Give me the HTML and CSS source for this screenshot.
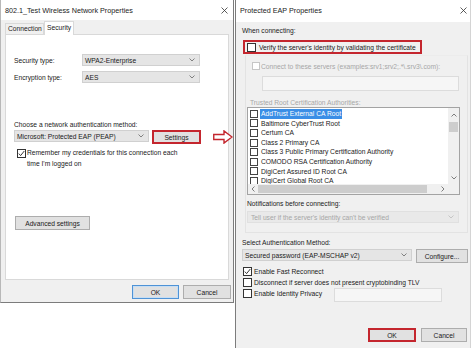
FILE: index.html
```html
<!DOCTYPE html>
<html lang="en">
<head>
  <meta charset="UTF-8">
  <title>Wireless Network Properties</title>
  <link rel="stylesheet" href="styles.css">
</head>
<body>
  <!-- Left dialog -->
  <div class="dialog dialog-left">
    <div class="titlebar">
      <span>802.1_Test Wireless Network Properties</span>
      <svg class="close" width="7" height="7" viewBox="0 0 7 7"><path d="M0.5 0.5L6.5 6.5M6.5 0.5L0.5 6.5" stroke="#333" stroke-width="0.8"/></svg>
    </div>
    <div class="tabs">
      <div class="tab tab-connection">Connection</div>
      <div class="tab tab-security active">Security</div>
    </div>
    <div class="tab-panel">
      <div class="form-row">
        <span class="form-label">Security type:</span>
        <div class="combo combo-type"><span>WPA2-Enterprise</span><svg width="6" height="4" viewBox="0 0 6 4"><polyline points="0.5,0.5 3,3 5.5,0.5" fill="none" stroke="#666" stroke-width="0.8"/></svg></div>
      </div>
      <div class="form-row">
        <span class="form-label">Encryption type:</span>
        <div class="combo combo-type"><span>AES</span><svg width="6" height="4" viewBox="0 0 6 4"><polyline points="0.5,0.5 3,3 5.5,0.5" fill="none" stroke="#666" stroke-width="0.8"/></svg></div>
      </div>

      <div class="auth-label">Choose a network authentication method:</div>
      <div class="auth-row">
        <div class="combo combo-auth"><span>Microsoft: Protected EAP (PEAP)</span><svg width="6" height="4" viewBox="0 0 6 4"><polyline points="0.5,0.5 3,3 5.5,0.5" fill="none" stroke="#666" stroke-width="0.8"/></svg></div>
        <div class="btn btn-settings marked">Settings</div>
      </div>

      <div class="remember-row">
        <span class="check"><svg width="7" height="7" viewBox="0 0 7 7"><polyline points="0.8,3.6 2.6,5.6 6.3,1" fill="none" stroke="#222" stroke-width="0.9"/></svg></span>
        <span class="remember-text">Remember my credentials for this connection each<br>time I'm logged on</span>
      </div>

      <div class="btn btn-advanced">Advanced settings</div>
    </div>
    <div class="footer footer-left">
      <div class="btn btn-default btn-ok-left">OK</div>
      <div class="btn btn-cancel-left">Cancel</div>
    </div>

    <!-- arrow pointing to the next dialog -->
    <svg class="next-arrow" width="20" height="14" viewBox="0 0 20 14"><polygon points="0.75,4.5 11,4.5 11,0.9 19,7 11,13.1 11,9.5 0.75,9.5" fill="#fff" stroke="#c4262e" stroke-width="1.4"/></svg>
  </div>

  <!-- Right dialog -->
  <div class="dialog dialog-right">
    <div class="titlebar">
      <span>Protected EAP Properties</span>
      <svg class="close" width="7" height="7" viewBox="0 0 7 7"><path d="M0.5 0.5L6.5 6.5M6.5 0.5L0.5 6.5" stroke="#333" stroke-width="0.8"/></svg>
    </div>

    <div class="caption">When connecting:</div>
    <div class="verify-box">
      <span class="check"></span>
      <span>Verify the server's identity by validating the certificate</span>
    </div>

    <div class="server-group">
      <div class="connect-row">
        <span class="check check-disabled"></span>
        <span class="muted">Connect to these servers (examples:srv1;srv2;.*\.srv3\.com):</span>
      </div>
      <div class="input input-servers"></div>

      <div class="trusted-label muted">Trusted Root Certification Authorities:</div>
      <div class="cert-list">
        <div class="cert-items">
          <div class="cert"><span class="check check-small"></span><span class="cert-name selected">AddTrust External CA Root</span></div>
          <div class="cert"><span class="check check-small"></span><span class="cert-name">Baltimore CyberTrust Root</span></div>
          <div class="cert"><span class="check check-small"></span><span class="cert-name">Certum CA</span></div>
          <div class="cert"><span class="check check-small"></span><span class="cert-name">Class 2 Primary CA</span></div>
          <div class="cert"><span class="check check-small"></span><span class="cert-name">Class 3 Public Primary Certification Authority</span></div>
          <div class="cert"><span class="check check-small"></span><span class="cert-name">COMODO RSA Certification Authority</span></div>
          <div class="cert"><span class="check check-small"></span><span class="cert-name">DigiCert Assured ID Root CA</span></div>
          <div class="cert"><span class="check check-small"></span><span class="cert-name">DigiCert Global Root CA</span></div>
        </div>
        <div class="vscroll">
          <div class="scroll-arrow"><svg width="6" height="4" viewBox="0 0 6 4"><polyline points="0.5,3.5 3,1 5.5,3.5" fill="none" stroke="#606060" stroke-width="0.8"/></svg></div>
          <div class="vthumb"></div>
          <div class="spacer"></div>
          <div class="scroll-arrow"><svg width="6" height="4" viewBox="0 0 6 4"><polyline points="0.5,0.5 3,3 5.5,0.5" fill="none" stroke="#606060" stroke-width="0.8"/></svg></div>
        </div>
        <div class="hscroll">
          <div class="scroll-arrow harrow"><svg width="4" height="6" viewBox="0 0 4 6"><polyline points="3.5,0.5 1,3 3.5,5.5" fill="none" stroke="#606060" stroke-width="0.8"/></svg></div>
          <div class="hthumb"></div>
          <div class="spacer"></div>
          <div class="scroll-arrow harrow"><svg width="4" height="6" viewBox="0 0 4 6"><polyline points="0.5,0.5 3,3 0.5,5.5" fill="none" stroke="#606060" stroke-width="0.8"/></svg></div>
        </div>
        <div class="corner"></div>
      </div>

      <div class="notify-label">Notifications before connecting:</div>
      <div class="combo combo-disabled"><span>Tell user if the server's identity can't be verified</span><svg width="6" height="4" viewBox="0 0 6 4"><polyline points="0.5,0.5 3,3 5.5,0.5" fill="none" stroke="#bbb" stroke-width="0.8"/></svg></div>
    </div>

    <div class="caption method-label">Select Authentication Method:</div>
    <div class="method-row">
      <div class="combo combo-method"><span>Secured password (EAP-MSCHAP v2)</span><svg width="6" height="4" viewBox="0 0 6 4"><polyline points="0.5,0.5 3,3 5.5,0.5" fill="none" stroke="#666" stroke-width="0.8"/></svg></div>
      <div class="btn btn-configure">Configure...</div>
    </div>

    <div class="options">
      <div class="option">
        <span class="check"><svg width="7" height="7" viewBox="0 0 7 7"><polyline points="0.8,3.6 2.6,5.6 6.3,1" fill="none" stroke="#222" stroke-width="0.9"/></svg></span>
        <span>Enable Fast Reconnect</span>
      </div>
      <div class="option">
        <span class="check"></span>
        <span>Disconnect if server does not present cryptobinding TLV</span>
      </div>
      <div class="option">
        <span class="check"></span>
        <span class="privacy-label">Enable Identity Privacy</span>
        <div class="input input-privacy"></div>
      </div>
    </div>

    <div class="footer footer-right">
      <div class="btn btn-ok-right marked">OK</div>
      <div class="btn btn-cancel-right">Cancel</div>
    </div>
  </div>
</body>
</html>
```

FILE: styles.css
```css
* {
  box-sizing: border-box;
}

body {
  margin: 0;
  width: 474px;
  height: 348px;
  overflow: hidden;
  background: #ffffff;
  font-family: "Liberation Sans", Arial, sans-serif;
  font-size: 6.7px;
  color: #1a1a1a;
  display: flex;
  align-items: flex-start;
}

.dialog {
  background: #f0f0f0;
  display: flex;
  flex-direction: column;
}

.dialog-left {
  width: 234px;
  height: 303px;
  border-left: 1px solid #b8b8b8;
  border-right: 1px solid #7c7c7c;
  border-bottom: 1px solid #7c7c7c;
  position: relative;
}

.dialog-right {
  width: 236px;
  height: 348px;
  margin-left: 1px;
  border-left: 1px solid #7c7c7c;
  border-right: 1px solid #d4d4d4;
}

/* Title bars */
.titlebar {
  background: #ffffff;
  display: flex;
  align-items: center;
  justify-content: space-between;
  font-size: 7.2px;
  color: #222;
}

.dialog-left .titlebar {
  height: 20px;
  padding: 0 5px 0 4px;
}

.dialog-right .titlebar {
  height: 22px;
  padding: 0 3px 2px 4px;
}

/* Buttons, combos, checks */
.btn {
  display: flex;
  align-items: center;
  justify-content: center;
  height: 14px;
  background: #e1e1e1;
  border: 1px solid #adadad;
  flex: none;
}

.btn.marked {
  border: 2px solid #c4262e;
}

.btn-default {
  border: 1px solid #4f93d6;
  box-shadow: inset 0 0 0 1px #c7def4;
}

.combo {
  height: 12px;
  background: #e5e5e5;
  border: 1px solid #d0d0d0;
  display: flex;
  align-items: center;
  justify-content: space-between;
  padding: 0 4px 0 2px;
  flex: none;
  white-space: nowrap;
}

.check {
  width: 9px;
  height: 9px;
  border: 1px solid #333;
  background: #ffffff;
  flex: none;
  display: flex;
  align-items: center;
  justify-content: center;
}

.check-disabled {
  width: 8px;
  height: 8px;
  border-color: #c6c6c6;
}

.check-small {
  width: 8px;
  height: 8px;
  border-color: #444;
}

.muted {
  color: #a6a6a6;
}

.input {
  background: #f6f6f6;
  border: 1px solid #dcdcdc;
  flex: none;
}

/* Left dialog */
.tabs {
  display: flex;
  align-items: flex-end;
  height: 13px;
  margin-top: 1px;
  padding-left: 4px;
}

.tab {
  height: 11px;
  border: 1px solid #d9d9d9;
  border-bottom: none;
  padding-left: 2px;
  line-height: 10px;
}

.tab-connection {
  width: 39px;
}

.tab-security {
  width: 30px;
}

.tab.active {
  height: 14px;
  margin-bottom: -1px;
  background: #ffffff;
  line-height: 12px;
  position: relative;
  z-index: 1;
}

.tab-panel {
  margin-left: 4px;
  width: 224px;
  height: 246px;
  background: #ffffff;
  border: 1px solid #d9d9d9;
  padding: 19px 0 0 8px;
}

.form-row {
  display: flex;
  align-items: center;
  height: 12px;
}

.form-row + .form-row {
  margin-top: 5px;
}

.form-label {
  width: 68px;
}

.combo-type {
  width: 118px;
}

.auth-label {
  margin-top: 37px;
  line-height: 9px;
}

.auth-row {
  display: flex;
  align-items: flex-start;
  gap: 3px;
  margin-top: 1px;
}

.combo-auth {
  width: 135px;
}

.btn-settings {
  width: 49px;
}

.remember-row {
  display: flex;
  align-items: flex-start;
  margin-top: 3px;
}

.remember-row .check {
  margin: 2px 0 0 3px;
}

.remember-text {
  margin-left: 1px;
  line-height: 11px;
}

.btn-advanced {
  width: 75px;
  margin: 47px 0 0 1px;
}

.footer {
  display: flex;
  justify-content: flex-end;
}

.footer-left {
  gap: 4px;
  margin-top: 5px;
  padding-right: 2px;
}

.btn-ok-left {
  width: 47px;
}

.btn-cancel-left {
  width: 48px;
}

.next-arrow {
  position: absolute;
  left: 212px;
  top: 130px;
}

/* Right dialog */
.caption {
  margin-top: 4px;
  padding-left: 6px;
  line-height: 10px;
}

.verify-box {
  display: flex;
  align-items: center;
  gap: 3px;
  width: 179px;
  height: 14px;
  margin: 4px 0 0 7px;
  padding-left: 2px;
  border: 2px solid #c4262e;
  white-space: nowrap;
}

.server-group {
  width: 223px;
  margin: 1px 0 0 9px;
  padding-bottom: 9px;
  border: 1px solid #e3e3e3;
  border-top-color: #ececec;
}

.connect-row {
  display: flex;
  align-items: center;
  gap: 1px;
  height: 10px;
  margin: 5px 0 0 6px;
  white-space: nowrap;
}

.input-servers {
  width: 197px;
  height: 15px;
  margin: 5px 0 0 16px;
}

.trusted-label {
  margin: 8px 0 0 4px;
  line-height: 8px;
}

.cert-list {
  width: 213px;
  height: 88px;
  margin-left: 1px;
  border: 1px solid #a3a3a3;
  background: #ffffff;
  display: grid;
  grid-template-columns: 1fr 11px;
  grid-template-rows: 1fr 10px;
  overflow: hidden;
}

.cert-items {
  overflow: hidden;
  padding-top: 1px;
}

.cert {
  display: flex;
  align-items: center;
  gap: 2px;
  height: 9.6px;
  padding-left: 2px;
  white-space: nowrap;
}

.cert-name {
  padding: 0 1px;
  line-height: 9.6px;
}

.cert-name.selected {
  background: #3a8ee6;
  color: #ffffff;
}

.vscroll {
  background: #f0f0f0;
  display: flex;
  flex-direction: column;
  align-items: center;
}

.scroll-arrow {
  height: 13px;
  display: flex;
  align-items: center;
  justify-content: center;
  flex: none;
}

.vthumb {
  width: 9px;
  height: 10px;
  margin-top: 1px;
  background: #cdcdcd;
}

.spacer {
  flex: 1;
}

.hscroll {
  background: #f0f0f0;
  display: flex;
  align-items: center;
}

.harrow {
  width: 10px;
  height: 10px;
}

.hthumb {
  width: 169px;
  height: 8px;
  background: #cdcdcd;
}

.corner {
  background: #f0f0f0;
}

.notify-label {
  margin: 4px 0 0 1px;
  line-height: 10px;
}

.combo-disabled {
  width: 212px;
  margin: 2px 0 0 1px;
  background: #e9e9e9;
  border-color: #e0e0e0;
  color: #a6a6a6;
  padding-left: 3px;
}

.method-label {
  margin-top: 5px;
}

.method-row {
  display: flex;
  align-items: flex-start;
  gap: 4px;
  margin: 1px 0 0 6px;
}

.combo-method {
  width: 170px;
}

.btn-configure {
  width: 52px;
}

.options {
  margin: 3px 0 0 7px;
}

.option {
  display: flex;
  align-items: center;
  gap: 2px;
  height: 11px;
  white-space: nowrap;
}

.privacy-label {
  width: 78px;
}

.input-privacy {
  width: 108px;
  height: 14px;
  align-self: flex-start;
}

.footer-right {
  gap: 5px;
  margin-top: 29px;
  padding-right: 3px;
}

.btn-ok-right {
  width: 48px;
}

.btn-cancel-right {
  width: 46px;
}
```
